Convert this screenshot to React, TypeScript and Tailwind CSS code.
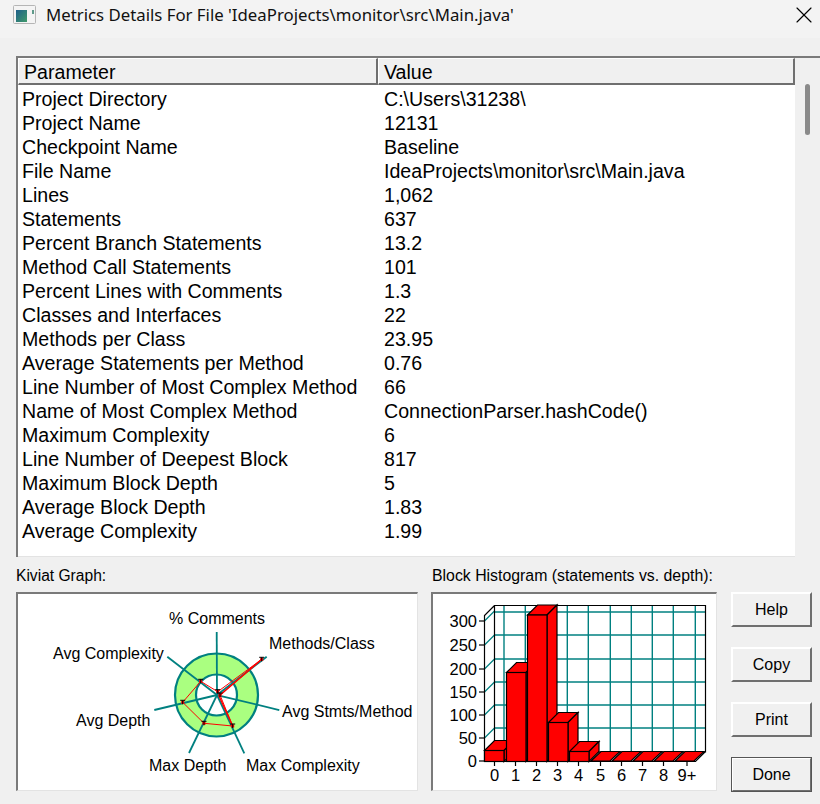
import React from 'react';
import { X } from 'lucide-react';

const ROWS: [string, string][] = [
  ['Project Directory', 'C:\\Users\\31238\\'],
  ['Project Name', '12131'],
  ['Checkpoint Name', 'Baseline'],
  ['File Name', 'IdeaProjects\\monitor\\src\\Main.java'],
  ['Lines', '1,062'],
  ['Statements', '637'],
  ['Percent Branch Statements', '13.2'],
  ['Method Call Statements', '101'],
  ['Percent Lines with Comments', '1.3'],
  ['Classes and Interfaces', '22'],
  ['Methods per Class', '23.95'],
  ['Average Statements per Method', '0.76'],
  ['Line Number of Most Complex Method', '66'],
  ['Name of Most Complex Method', 'ConnectionParser.hashCode()'],
  ['Maximum Complexity', '6'],
  ['Line Number of Deepest Block', '817'],
  ['Maximum Block Depth', '5'],
  ['Average Block Depth', '1.83'],
  ['Average Complexity', '1.99'],
];

const TEAL = '#008080';
const FONT = '"Liberation Sans", Arial, sans-serif';

const AppIcon: React.FC = () => (
  <svg width="24" height="20" viewBox="0 0 24 20">
    <defs>
      <linearGradient id="tile" x1="0" y1="0" x2="1" y2="1">
        <stop offset="0" stopColor="#1f5f8a" />
        <stop offset="1" stopColor="#3f9a6a" />
      </linearGradient>
    </defs>
    <rect x="1.5" y="0.5" width="22" height="18" rx="1" fill="#f4f4f4" stroke="#b5b5b5" />
    <rect x="4" y="5" width="11" height="12" fill="url(#tile)" />
    <rect x="20" y="5" width="2" height="4" fill="#5f9a8a" />
  </svg>
);

const KIVIAT_AXES: [number, number][] = [
  [216.7, 632],
  [266.7, 656.7],
  [279.3, 710],
  [244.3, 753.3],
  [189, 753],
  [154.3, 710],
  [167.3, 656.7],
];

const KIVIAT_POINTS: [number, number][] = [
  [217.7, 691.7],
  [261.7, 659.3],
  [220, 695],
  [232.7, 726],
  [204, 723.3],
  [182.7, 702.3],
  [200.7, 681.3],
];

const KIVIAT_LABELS: [string, number, number][] = [
  ['% Comments', 169, 624],
  ['Methods/Class', 269, 649],
  ['Avg Stmts/Method', 282, 717],
  ['Max Complexity', 246, 771],
  ['Max Depth', 149, 771],
  ['Avg Depth', 76, 726],
  ['Avg Complexity', 53, 659],
];

const KiviatGraph: React.FC = () => (
  <svg viewBox="18 594 399 196" className="block w-full h-full" style={{ fontFamily: FONT }}>
    <circle cx="216.5" cy="695" r="41.5" fill="#aaff80" stroke={TEAL} strokeWidth="2.2" />
    <circle cx="216.5" cy="695" r="20.5" fill="#ffffff" stroke={TEAL} strokeWidth="2.2" />
    {KIVIAT_AXES.map(([x, y], i) => (
      <line key={i} x1="217" y1="695" x2={x} y2={y} stroke={TEAL} strokeWidth="1.8" />
    ))}
    <polygon
      points={KIVIAT_POINTS.map(([x, y]) => `${x},${y}`).join(' ')}
      fill="none"
      stroke="#ff0000"
      strokeWidth="1"
    />
    <line x1="219" y1="696" x2="261.7" y2="659.3" stroke="#ff0000" strokeWidth="1.5" />
    <line x1="219" y1="696" x2="232.7" y2="726" stroke="#ff0000" strokeWidth="1.5" />
    {KIVIAT_POINTS.map(([x, y], i) => (
      <g key={i}>
        <rect x={x - 1.5} y={y - 1.5} width="3" height="3" fill="#ff0000" />
        <path d={`M${x - 2.5} ${y - 2}h5M${x} ${y - 2}v4`} stroke="#000" strokeWidth="1" fill="none" />
      </g>
    ))}
    {KIVIAT_LABELS.map(([t, x, y]) => (
      <text key={t} x={x} y={y} fontSize="16" fill="#000">
        {t}
      </text>
    ))}
  </svg>
);

const H_GRID = [612, 635, 659, 682, 705, 728];
const V_GRID = [504, 525.3, 546.3, 567.3, 588.3, 610.3, 631.3, 652.3, 673.3, 695.3];
const Y_TICKS: [string, number][] = [
  ['300', 621],
  ['250', 645],
  ['200', 669],
  ['150', 692],
  ['100', 715],
  ['50', 738],
  ['0', 761],
];
const BARS: [number, number][] = [
  [484.5, 750.5],
  [506.5, 672.5],
  [527.5, 615],
  [548.5, 722.5],
  [569.5, 751.5],
];
const FLAT_BARS = [591, 612, 633, 654, 675];
const X_LABELS: [string, number][] = [
  ['0', 494.5],
  ['1', 515.5],
  ['2', 536.5],
  ['3', 557.5],
  ['4', 578.5],
  ['5', 600.5],
  ['6', 621.5],
  ['7', 642.5],
  ['8', 663.5],
  ['9+', 687],
];

const Histogram: React.FC = () => (
  <svg viewBox="433 594 283 196" className="block w-full h-full" style={{ fontFamily: FONT }}>
    {H_GRID.map((y) => (
      <line key={y} x1="494" y1={y} x2="705" y2={y} stroke={TEAL} strokeWidth="1.4" />
    ))}
    {V_GRID.map((x) => (
      <line key={x} x1={x} y1="606" x2={x} y2="752" stroke={TEAL} strokeWidth="1.4" />
    ))}
    {Y_TICKS.slice(0, 6).map(([t, y]) => (
      <line key={t} x1="484.5" y1={y} x2="494.5" y2={y - 10} stroke={TEAL} strokeWidth="1.2" />
    ))}
    <path d="M494.5 752V605.5H705.5V752H494.5M494.5 605.5L484.5 615.5V761.5H695.5L705.5 751.5" fill="none" stroke="#000" strokeWidth="1.2" />
    {Y_TICKS.map(([t, y]) => (
      <g key={t}>
        <line x1="479" y1={y} x2="484.5" y2={y} stroke="#000" strokeWidth="1.2" />
        <text x="477" y={y + 6} fontSize="16.5" textAnchor="end" fill="#000">
          {t}
        </text>
      </g>
    ))}
    {X_LABELS.map(([t, x]) => (
      <g key={t}>
        <line x1={x} y1="761.5" x2={x} y2="766" stroke="#000" strokeWidth="1.2" />
        <text x={x} y="781" fontSize="16.5" textAnchor="middle" fill="#000">
          {t}
        </text>
      </g>
    ))}
    {FLAT_BARS.map((x) => (
      <path key={x} d={`M${x} 761L${x + 10} 751.5H${x + 29}L${x + 19} 761Z`} fill="#ff0000" stroke="#000" strokeWidth="1.2" />
    ))}
    {BARS.map(([x, y]) => {
      const w = 19.5;
      return (
        <g key={x} fill="#ff0000" stroke="#000" strokeWidth="1.2">
          <path d={`M${x} ${y}l10 -10h${w}l-10 10Z`} />
          <path d={`M${x + w} ${y}l10 -10V751.5l-10 10Z`} />
          <rect x={x} y={y} width={w} height={761.5 - y} />
        </g>
      );
    })}
  </svg>
);

const DialogButton: React.FC<{ label: string; isDefault?: boolean }> = ({ label, isDefault }) => (
  <div
    className={`w-[81px] h-[35px] flex items-center justify-center bg-[#f0f0f0] text-[16px] text-black border-t-2 border-l-2 border-t-white border-l-white border-b-2 border-r-2 border-b-[#6f6f6f] border-r-[#6f6f6f] ${
      isDefault ? 'outline outline-1 -outline-offset-1 outline-[#555555]' : ''
    }`}
  >
    {label}
  </div>
);

const App: React.FC = () => {
  return (
    <div
      className="w-[820px] h-[804px] overflow-hidden bg-[#f0f0f0] flex flex-col"
      style={{ fontFamily: FONT }}
    >
      <div className="h-[38px] shrink-0 bg-[#f3f3f3] flex items-center pl-[12px] pr-[2px] pb-[9px]">
        <AppIcon />
        <span className="ml-[10px] flex-1 text-[16.8px] text-[#111111]" style={{ fontFamily: '"Noto Sans", sans-serif' }}>
          Metrics Details For File 'IdeaProjects\monitor\src\Main.java'
        </span>
        <X size={28} strokeWidth={1} className="text-black" />
      </div>

      <div className="mt-[18px] ml-[16px] h-[501px] shrink-0 flex flex-col border-t-2 border-t-[#7a7a7a] border-l-2 border-l-[#7a7a7a]">
        <div className="flex flex-1 min-h-0">
          <div className="w-[777px] bg-white border-b border-b-[#e3e3e3]">
            <div className="flex h-[27px] text-[19.6px] leading-[26px] text-black">
              <div className="w-[360px] pl-[5px] bg-[#f0f0f0] border-t border-l border-t-white border-l-white border-r-2 border-b-2 border-r-[#6f6f6f] border-b-[#6f6f6f]">
                Parameter
              </div>
              <div className="flex-1 pl-[5px] bg-[#f0f0f0] border-t border-l border-t-white border-l-white border-r-2 border-b-2 border-r-[#6f6f6f] border-b-[#6f6f6f]">
                Value
              </div>
            </div>
            <div className="pt-[2px] pl-[4px]">
              {ROWS.map(([name, value]) => (
                <div key={name} className="flex h-[24px] text-[19.6px] leading-[24px] text-black whitespace-nowrap">
                  <div className="w-[362px] shrink-0">{name}</div>
                  <div>{value}</div>
                </div>
              ))}
            </div>
          </div>
          <div className="flex-1 flex justify-center pt-[26px]">
            <div className="w-[5px] h-[51px] rounded-full bg-[#8a8a8a]" />
          </div>
        </div>
      </div>

      <div className="mt-[8px] px-[16px] flex">
        <div className="w-[402px] shrink-0">
          <div className="h-[27px] text-[15.6px] leading-[22px] text-black">Kiviat Graph:</div>
          <div className="h-[199px] bg-white border-t-2 border-l-2 border-t-[#7a7a7a] border-l-[#7a7a7a] border-b border-r border-b-[#e3e3e3] border-r-[#e3e3e3]">
            <KiviatGraph />
          </div>
        </div>
        <div className="ml-[13px] w-[286px] shrink-0">
          <div className="h-[27px] text-[15.85px] leading-[22px] text-black whitespace-nowrap pl-[1px]">
            Block Histogram (statements vs. depth):
          </div>
          <div className="h-[199px] bg-white border-t-2 border-l-2 border-t-[#7a7a7a] border-l-[#7a7a7a] border-b border-r border-b-[#e3e3e3] border-r-[#e3e3e3]">
            <Histogram />
          </div>
        </div>
        <div className="ml-[14px] mt-[27px] flex flex-col gap-[20px]">
          <DialogButton label="Help" />
          <DialogButton label="Copy" />
          <DialogButton label="Print" />
          <DialogButton label="Done" isDefault />
        </div>
      </div>
    </div>
  );
};

export default App;
